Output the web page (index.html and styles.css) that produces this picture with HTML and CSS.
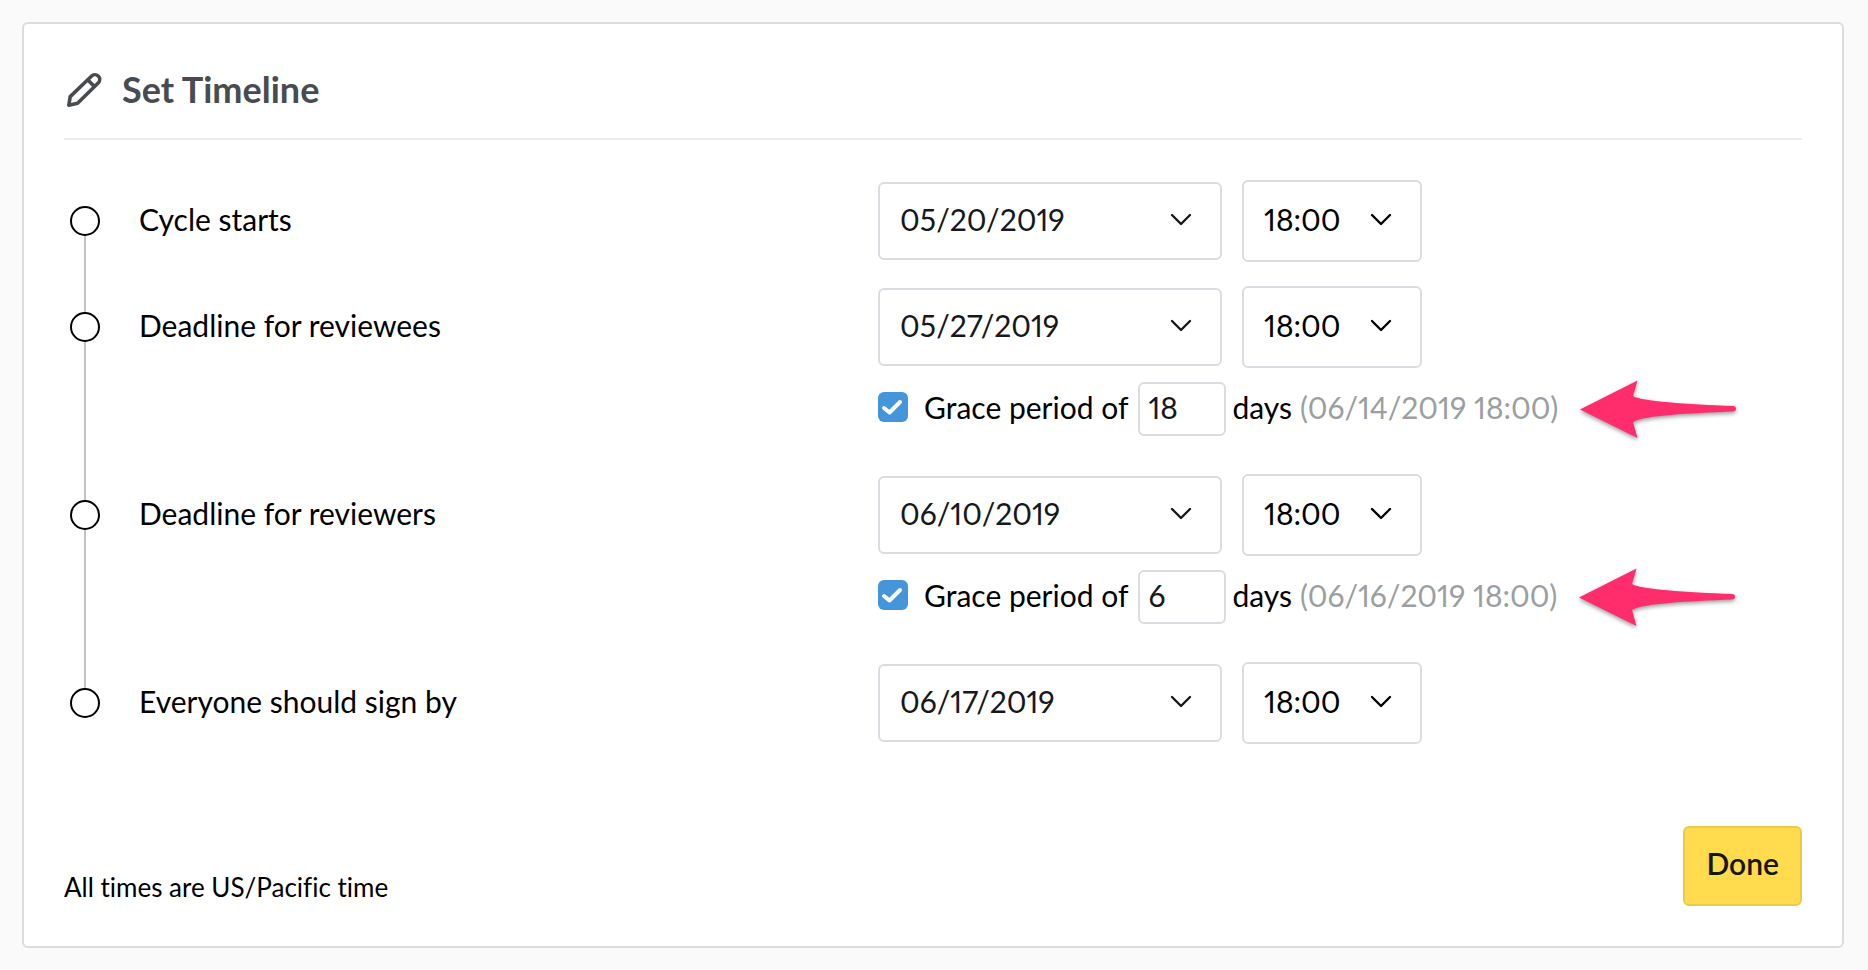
FILE: index.html
```html
<!DOCTYPE html>
<html lang="en">
<head>
<meta charset="utf-8">
<meta name="viewport" content="width=device-width, initial-scale=1">
<title>Set Timeline</title>
<link rel="stylesheet" href="styles.css">
</head>
<body>
<svg class="defs" aria-hidden="true">
  <symbol id="chevron" viewBox="0 0 22 14"><path d="M2 2 L11 11 L20 2" fill="none" stroke="currentColor" stroke-width="2.4" stroke-linecap="round" stroke-linejoin="round"/></symbol>
  <symbol id="arrow" viewBox="0 0 160 64"><path d="M2 29.5 L59.5 0.5 L55 16 C62 21 110 24.5 155 26 Q158 26.3 158 28.7 Q158 31.2 155 31.5 C110 33.5 68 35 55 42 L59.5 58 Z" fill="#ff2d6b"/></symbol>
</svg>
<main class="card">
  <header class="card-header">
    <svg class="pencil" viewBox="0 0 36 36" aria-hidden="true"><g fill="none" stroke="currentColor" stroke-width="3.6" stroke-linejoin="round"><path d="M2.8 33.2 L4.2 24.6 L25.4 4.2 A4.7 4.7 0 0 1 32.4 10.8 L11.6 31.2 Z"/><path d="M21.6 7.8 L28.6 14.6"/></g></svg>
    <h1 class="title">Set Timeline</h1>
  </header>
  <form class="form">
    <ol class="steps">
      <li class="step">
        <span class="marker"><span class="dot"></span></span>
        <label class="label" for="start-date">Cycle starts</label>
        <div class="controls">
          <div class="pickers">
            <span class="picker picker-date"><select id="start-date"><option>05/20/2019</option></select><svg class="chevron"><use href="#chevron"/></svg></span>
            <span class="picker picker-time"><select aria-label="Cycle start time"><option>18:00</option></select><svg class="chevron"><use href="#chevron"/></svg></span>
          </div>
        </div>
      </li>
      <li class="step">
        <span class="marker"><span class="dot"></span></span>
        <label class="label" for="reviewee-date">Deadline for reviewees</label>
        <div class="controls">
          <div class="pickers">
            <span class="picker picker-date"><select id="reviewee-date"><option>05/27/2019</option></select><svg class="chevron"><use href="#chevron"/></svg></span>
            <span class="picker picker-time"><select aria-label="Reviewee deadline time"><option>18:00</option></select><svg class="chevron"><use href="#chevron"/></svg></span>
          </div>
          <div class="grace">
            <span class="check"><input type="checkbox" id="reviewee-grace" checked><svg viewBox="0 0 30 30" aria-hidden="true"><path d="M6 16 L11.5 20.5 L22 10"/></svg></span>
            <label class="grace-label" for="reviewee-grace">Grace period of</label>
            <input class="days" type="text" value="18" id="reviewee-days">
            <label class="unit" for="reviewee-days">days</label>
            <span class="until">(06/14/2019 18:00)</span>
            <svg class="arrow" aria-hidden="true"><use href="#arrow"/></svg>
          </div>
        </div>
      </li>
      <li class="step">
        <span class="marker"><span class="dot"></span></span>
        <label class="label" for="reviewer-date">Deadline for reviewers</label>
        <div class="controls">
          <div class="pickers">
            <span class="picker picker-date"><select id="reviewer-date"><option>06/10/2019</option></select><svg class="chevron"><use href="#chevron"/></svg></span>
            <span class="picker picker-time"><select aria-label="Reviewer deadline time"><option>18:00</option></select><svg class="chevron"><use href="#chevron"/></svg></span>
          </div>
          <div class="grace">
            <span class="check"><input type="checkbox" id="reviewer-grace" checked><svg viewBox="0 0 30 30" aria-hidden="true"><path d="M6 16 L11.5 20.5 L22 10"/></svg></span>
            <label class="grace-label" for="reviewer-grace">Grace period of</label>
            <input class="days" type="text" value="6" id="reviewer-days">
            <label class="unit" for="reviewer-days">days</label>
            <span class="until">(06/16/2019 18:00)</span>
            <svg class="arrow" aria-hidden="true"><use href="#arrow"/></svg>
          </div>
        </div>
      </li>
      <li class="step">
        <span class="marker"><span class="dot"></span></span>
        <label class="label" for="sign-date">Everyone should sign by</label>
        <div class="controls">
          <div class="pickers">
            <span class="picker picker-date"><select id="sign-date"><option>06/17/2019</option></select><svg class="chevron"><use href="#chevron"/></svg></span>
            <span class="picker picker-time"><select aria-label="Signing time"><option>18:00</option></select><svg class="chevron"><use href="#chevron"/></svg></span>
          </div>
        </div>
      </li>
    </ol>
    <footer class="card-footer">
      <p class="note">All times are US/Pacific time</p>
      <button class="done" type="button">Done</button>
    </footer>
  </form>
</main>
</body>
</html>
```
FILE: styles.css
```css
* { box-sizing: border-box; }

body {
  margin: 22px 24px 22px 22px;
  background: #fafafa;
  color: #000;
  font-family: Lato, "Open Sans", sans-serif;
  font-size: 30px;
  line-height: 40px;
  font-variant-ligatures: none;
  font-variant-numeric: proportional-nums;
}

select, input, button {
  margin: 0;
  color: inherit;
  font: inherit;
  font-variant-numeric: proportional-nums;
}

.defs { position: absolute; width: 0; height: 0; }

.card {
  padding: 44px 40px 40px;
  background: #fff;
  border: 2px solid #d9dde1;
  border-radius: 6px;
  box-shadow: 0 2px 16px rgba(0, 0, 0, 0.04);
}

.card-header {
  display: flex;
  align-items: center;
  gap: 20px;
  padding: 0 0 26px 2px;
  border-bottom: 2px solid #ebeced;
  color: #484c50;
}

.pencil { width: 36px; height: 36px; }

.title {
  margin: 0;
  padding-bottom: 2px;
  font-size: 36px;
  line-height: 42px;
  font-weight: 700;
}

.steps {
  margin: 0;
  padding: 40px 0 0;
  list-style: none;
}

.step {
  display: grid;
  grid-template-columns: 75px 4fr 5fr;
}

.marker {
  display: flex;
  flex-direction: column;
  align-items: center;
  width: 30px;
  margin-left: 6px;
}

.marker::before,
.marker::after {
  content: "";
  width: 2px;
  background: #bfc2c6;
}

.marker::before { height: 26px; }
.marker::after { flex: 1; }

.step:first-child .marker::before,
.step:last-child .marker::after { background: none; }

.dot {
  width: 30px;
  height: 30px;
  border: 2px solid #000;
  border-radius: 50%;
}

.label { padding-top: 19px; }

.controls { padding-bottom: 24px; }

.step:last-child .controls { padding-bottom: 0; }

.pickers {
  display: flex;
  align-items: center;
  gap: 20px;
}

.picker { display: grid; }

.picker select,
.picker .chevron { grid-area: 1 / 1; }

.picker select {
  appearance: none;
  width: 100%;
  padding: 0 20px 4px;
  background: #fff;
  border: 2px solid #d9dde1;
  border-radius: 6px;
}

.picker-date { width: 344px; height: 78px; color: #16181a; }
.picker-time { width: 180px; height: 82px; }

.chevron {
  width: 22px;
  height: 14px;
  margin: 0 30px 3px 0;
  place-self: center end;
  pointer-events: none;
}

.grace {
  display: flex;
  align-items: center;
  padding: 14px 0;
}

.check {
  display: grid;
  width: 30px;
  height: 30px;
  margin-bottom: 4px;
}

.check input,
.check svg { grid-area: 1 / 1; }

.check input {
  appearance: none;
  width: 30px;
  height: 30px;
  background: #4495d9;
  border-radius: 6px;
}

.check svg {
  fill: none;
  stroke: #fff;
  stroke-width: 4;
  stroke-linecap: round;
  stroke-linejoin: round;
  pointer-events: none;
}

.grace-label,
.unit,
.until { padding-bottom: 4px; }

.grace-label { margin: 0 10px 0 16px; }

.days {
  width: 88px;
  height: 54px;
  margin-right: 6px;
  padding: 0 8px 4px;
  color: #16181a;
  background: #fff;
  border: 2px solid #d9dde1;
  border-radius: 6px;
}

.until { margin-left: 8px; color: #9b9fa1; }

.arrow {
  width: 160px;
  height: 64px;
  margin: -4px 0 -10px 20px;
  filter: drop-shadow(0 2px 2px rgba(0, 0, 0, 0.4));
}

.card-footer {
  display: flex;
  justify-content: space-between;
  align-items: flex-end;
  padding-top: 82px;
}

.note { margin: 0; padding-bottom: 1px; font-size: 26px; line-height: 36px; }

.done {
  padding: 15px 21px 21px;
  background: #ffdb4d;
  border: 2px solid #ebca49;
  border-radius: 6px;
  color: #16150a;
  font-weight: 600;
}
```
